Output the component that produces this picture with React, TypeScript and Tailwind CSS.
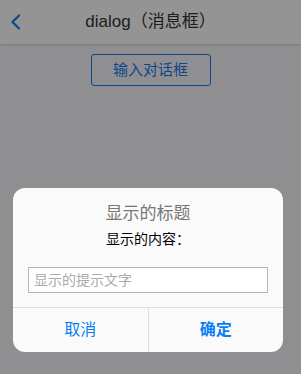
export default function App() {
  return (
    <div
      className="relative h-[374px] w-[301px] overflow-hidden bg-[#efeff4]"
      style={{ fontFamily: '"Liberation Sans", "Noto Sans CJK SC", sans-serif' }}
    >
      {/* Page header */}
      <div className="relative flex h-[44px] items-center justify-center bg-[#f7f7f7] shadow-[0_1px_2px_rgba(0,0,0,0.15)]">
        <svg
          className="absolute left-[10px] top-[14px]"
          width="12"
          height="16"
          viewBox="0 0 12 16"
          fill="none"
          stroke="#1677e6"
          strokeWidth="2.2"
          strokeLinecap="round"
          strokeLinejoin="round"
        >
          <polyline points="9,1.5 2.5,8 9,14.5" />
        </svg>
        <span className="text-[17px] text-[#333]">dialog（消息框）</span>
      </div>

      {/* Page content */}
      <div className="flex justify-center pt-[10px]">
        <button className="flex h-[32px] w-[120px] items-center justify-center rounded-[3px] border border-[#1677e6] text-[15px] text-[#1677e6]">
          输入对话框
        </button>
      </div>

      {/* Mask + dialog */}
      <div className="absolute inset-0 flex flex-col items-start justify-end bg-black/40 pb-[22px] pl-[13px]">
        <div className="w-[270px] overflow-hidden rounded-[12px] bg-[#fafafa]">
          <div className="flex flex-col items-center pt-[15px]">
            <div className="text-[17px] leading-[22px] text-[#777]">显示的标题</div>
            <div className="mt-[5px] text-[14px] leading-[18px] text-black">显示的内容：</div>
            <input
              className="mt-[19px] h-[26px] w-[240px] border border-[#b5b5b5] bg-white px-[5px] text-[14px] outline-none placeholder:text-[#aaa]"
              placeholder="显示的提示文字"
            />
          </div>
          <div className="mt-[14px] flex h-[45px] border-t border-[#dedede]">
            <button className="flex flex-1 items-center justify-center border-r border-[#dedede] text-[16px] text-[#0b7ef5]">
              取消
            </button>
            <button className="flex flex-1 items-center justify-center text-[16px] font-bold text-[#0b7ef5]">
              确定
            </button>
          </div>
        </div>
      </div>
    </div>
  );
}
